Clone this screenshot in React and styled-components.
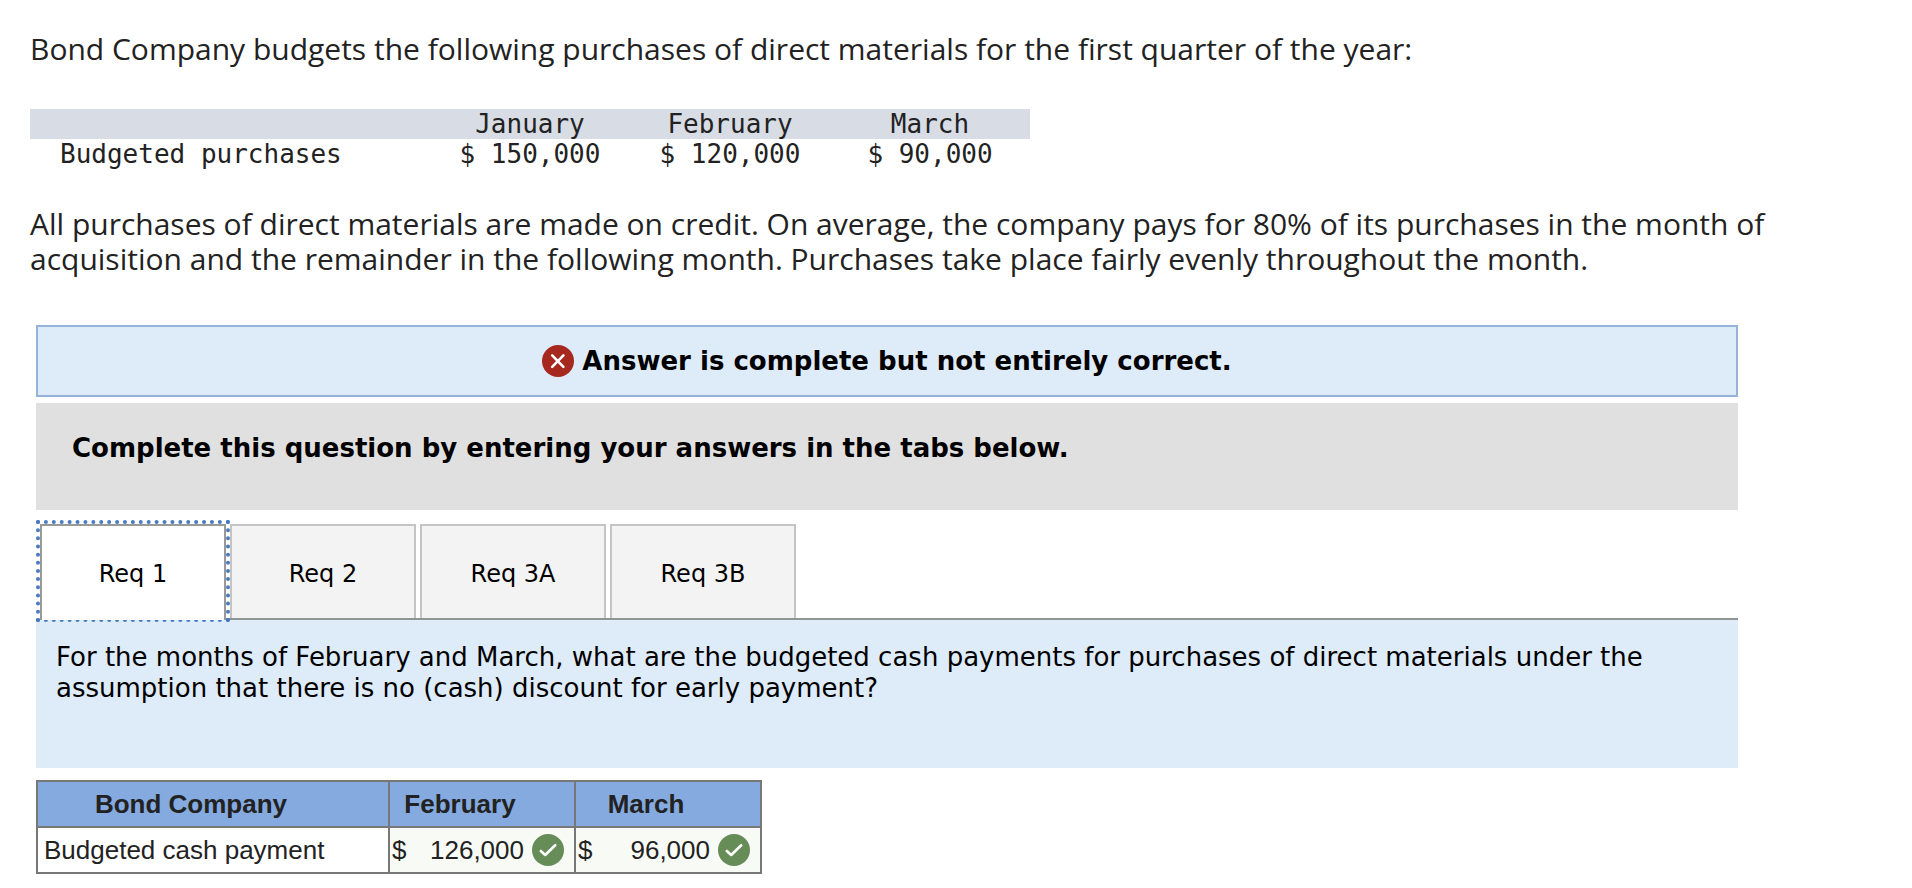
import React, { useState } from 'react'
import styled, { createGlobalStyle } from 'styled-components'

const GlobalStyle = createGlobalStyle`
  * {
    box-sizing: border-box;
  }
  body {
    margin: 0;
    background: #fff;
    color: #222;
    font-family: 'Open Sans', 'Noto Sans', sans-serif;
  }
`;

const Page = styled.main`
  padding: 31px 30px 14px;
`;

const Paragraph = styled.p`
  margin: 0;
  padding-right: 40px;
  font-size: 30px;
  line-height: 35px;
`;

const BudgetTable = styled.table`
  width: 100%;
  max-width: 1000px;
  margin: 43px 0 37px;
  border-collapse: collapse;
  table-layout: fixed;
  font-family: 'DejaVu Sans Mono', monospace;
  font-size: 26px;
  line-height: 30px;
  text-align: center;

  th,
  td {
    padding: 0;
    font-weight: normal;
  }
  thead {
    background: #d8dce5;
  }
  th:first-child {
    width: 40%;
    padding-left: 30px;
    text-align: left;
  }
`;

const Question = styled.section`
  margin: 49px 144px 0 6px;
  color: #000;
  font-family: 'DejaVu Sans', Verdana, sans-serif;
  font-size: 26px;
  line-height: 31px;

  @media only screen and (max-width: 950px) {
    margin-right: 6px;
  }
`;

const Alert = styled.div`
  display: flex;
  align-items: center;
  justify-content: center;
  gap: 8px;
  min-height: 72px;
  border: 2px solid #95b3d9;
  background: #deebf8;
  font-weight: bold;
`;

const Instructions = styled.div`
  margin-top: 6px;
  padding: 30px 36px 46px;
  background: #e0e0e0;
  font-weight: bold;
`;

const TabList = styled.div`
  display: flex;
  gap: 4px;
  margin: 14px 0 0 4px;
  border-bottom: 2px solid #8f9494;
`;

/* holds the dotted ring, the button sits over its upper half */
const TabItem = styled.div`
  position: relative;
  width: 186px;
  outline: ${({ $active }) => ($active ? '4px dotted #4a7bc0' : 'none')};
`;

const TabButton = styled.button`
  position: relative;
  z-index: 1;
  display: block;
  width: 100%;
  height: ${({ $active }) => ($active ? '96px' : '94px')};
  margin-bottom: ${({ $active }) => ($active ? '-2px' : '0')};
  padding: ${({ $active }) => ($active ? '4px 0 2px' : '4px 0 0')};
  border: 2px solid ${({ $active }) => ($active ? '#999' : '#c4c4c4')};
  border-bottom: 0;
  outline: none;
  background: ${({ $active }) => ($active ? '#fff' : '#f3f3f3')};
  color: #000;
  font-family: inherit;
  font-size: 24px;
  cursor: pointer;
`;

const TabPanel = styled.div`
  min-height: 148px;
  padding: 22px 20px;
  background: #deebf8;

  p {
    margin: 0;
  }
`;

const AnswerTable = styled.table`
  width: 100%;
  max-width: 726px;
  margin-top: 12px;
  border-collapse: collapse;
  table-layout: fixed;
  color: #222;
  font-family: 'Liberation Sans', Arial, sans-serif;
  font-size: 26px;
  line-height: 44px;

  th,
  td {
    padding: 0;
    border: 2px solid #777;
  }
  thead th {
    padding-right: 44px;
    background: #84aadf;
  }
  tbody th {
    padding-left: 6px;
    font-weight: normal;
    text-align: left;
  }
  td {
    background: #f8faf6;
  }
`;

const Col = styled.col`
  width: ${({ $wide }) => ($wide ? '352px' : '186px')};
`;

const Money = styled.div`
  display: flex;
  align-items: center;
  gap: 8px;
  padding: 0 10px 0 2px;
`;

const Amount = styled.span`
  flex: 1;
  text-align: right;
`;

const Icon = styled.svg`
  flex: none;
  width: 32px;
  height: 32px;
  fill: none;
  stroke: #fff;
  stroke-linecap: round;
  stroke-linejoin: round;
`;

function WrongIcon() {
  return (
    <Icon viewBox='0 0 32 32' aria-hidden='true'>
      <circle cx='16' cy='16' r='16' fill='#a6281f' stroke='none' />
      <path d='M10.2 10.4 21.4 21.8M21.4 10.4 10.2 21.8' strokeWidth='2.6' />
    </Icon>
  )
}

function CorrectIcon() {
  return (
    <Icon viewBox='0 0 32 32' role='img' aria-label='correct'>
      <circle cx='16' cy='16' r='16' fill='#668c58' stroke='none' />
      <path d='M8.8 17 13.2 21 23.2 11.2' strokeWidth='2.6' />
    </Icon>
  )
}

const tabs = ['Req 1', 'Req 2', 'Req 3A', 'Req 3B']

const budget = [
  { month: 'January', amount: '$ 150,000' },
  { month: 'February', amount: '$ 120,000' },
  { month: 'March', amount: '$ 90,000' },
]

const answers = [
  { month: 'February', amount: '126,000' },
  { month: 'March', amount: '96,000' },
]

function App() {
  const [active, setActive] = useState(tabs[0])

  return (
    <Page>
      <GlobalStyle />
      <Paragraph>
        Bond Company budgets the following purchases of direct materials for the first quarter of the year:
      </Paragraph>
      <BudgetTable>
        <thead>
          <tr>
            <th></th>
            {budget.map(({ month }) => <th key={month} scope='col'>{month}</th>)}
          </tr>
        </thead>
        <tbody>
          <tr>
            <th scope='row'>Budgeted purchases</th>
            {budget.map(({ month, amount }) => <td key={month}>{amount}</td>)}
          </tr>
        </tbody>
      </BudgetTable>
      <Paragraph>
        All purchases of direct materials are made on credit. On average, the company pays for 80% of its
        purchases in the month of acquisition and the remainder in the following month. Purchases take place
        fairly evenly throughout the month.
      </Paragraph>
      <Question>
        <Alert>
          <WrongIcon />
          <span>Answer is complete but not entirely correct.</span>
        </Alert>
        <Instructions>Complete this question by entering your answers in the tabs below.</Instructions>
        <TabList role='tablist'>
          {tabs.map((tab) => (
            <TabItem key={tab} $active={tab === active} role='presentation'>
              <TabButton
                type='button'
                role='tab'
                aria-selected={tab === active}
                aria-controls='requirement'
                $active={tab === active}
                onClick={() => setActive(tab)}
              >
                {tab}
              </TabButton>
            </TabItem>
          ))}
        </TabList>
        <TabPanel id='requirement' role='tabpanel'>
          <p>
            For the months of February and March, what are the budgeted cash payments for purchases of direct
            materials under the assumption that there is no (cash) discount for early payment?
          </p>
        </TabPanel>
        <AnswerTable>
          <colgroup>
            <Col $wide />
            <Col />
            <Col />
          </colgroup>
          <thead>
            <tr>
              <th scope='col'>Bond Company</th>
              {answers.map(({ month }) => <th key={month} scope='col'>{month}</th>)}
            </tr>
          </thead>
          <tbody>
            <tr>
              <th scope='row'>Budgeted cash payment</th>
              {answers.map(({ month, amount }) => (
                <td key={month}>
                  <Money>
                    <span>$</span>
                    <Amount>{amount}</Amount>
                    <CorrectIcon />
                  </Money>
                </td>
              ))}
            </tr>
          </tbody>
        </AnswerTable>
      </Question>
    </Page>
  )
}

export default App
